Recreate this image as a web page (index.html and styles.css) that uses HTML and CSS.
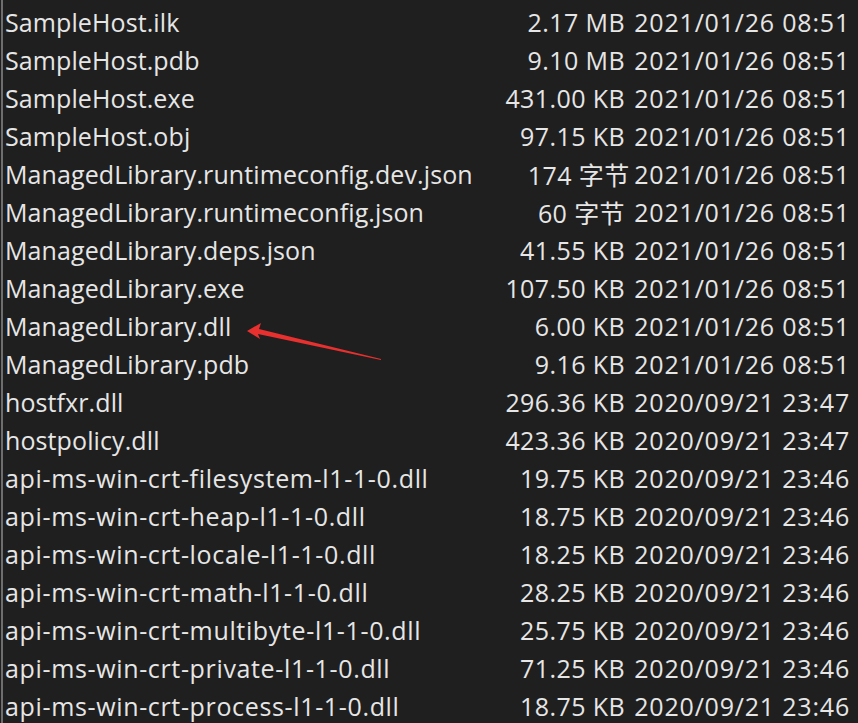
FILE: index.html
```html
<!DOCTYPE html>
<html lang="zh-CN">
  <head>
    <meta charset="UTF-8">
    <title>Files</title>
    <link rel="stylesheet" href="styles.css">
  </head>
  <body>
    <div class="listing">
      <div class="row"><span class="name">SampleHost.ilk</span><span class="size">2.17 MB</span><span class="date">2021/01/26 08:51</span></div>
      <div class="row"><span class="name">SampleHost.pdb</span><span class="size">9.10 MB</span><span class="date">2021/01/26 08:51</span></div>
      <div class="row"><span class="name">SampleHost.exe</span><span class="size">431.00 KB</span><span class="date">2021/01/26 08:51</span></div>
      <div class="row"><span class="name">SampleHost.obj</span><span class="size">97.15 KB</span><span class="date">2021/01/26 08:51</span></div>
      <div class="row"><span class="name">ManagedLibrary.runtimeconfig.dev.json</span><span class="size">174 字节</span><span class="date">2021/01/26 08:51</span></div>
      <div class="row"><span class="name">ManagedLibrary.runtimeconfig.json</span><span class="size">60 字节</span><span class="date">2021/01/26 08:51</span></div>
      <div class="row"><span class="name">ManagedLibrary.deps.json</span><span class="size">41.55 KB</span><span class="date">2021/01/26 08:51</span></div>
      <div class="row"><span class="name">ManagedLibrary.exe</span><span class="size">107.50 KB</span><span class="date">2021/01/26 08:51</span></div>
      <div class="row"><span class="name">ManagedLibrary.dll</span><span class="size">6.00 KB</span><span class="date">2021/01/26 08:51</span></div>
      <div class="row"><span class="name">ManagedLibrary.pdb</span><span class="size">9.16 KB</span><span class="date">2021/01/26 08:51</span></div>
      <div class="row"><span class="name">hostfxr.dll</span><span class="size">296.36 KB</span><span class="date">2020/09/21 23:47</span></div>
      <div class="row"><span class="name">hostpolicy.dll</span><span class="size">423.36 KB</span><span class="date">2020/09/21 23:47</span></div>
      <div class="row"><span class="name api">api-ms-win-crt-filesystem-l1-1-0.dll</span><span class="size">19.75 KB</span><span class="date">2020/09/21 23:46</span></div>
      <div class="row"><span class="name api">api-ms-win-crt-heap-l1-1-0.dll</span><span class="size">18.75 KB</span><span class="date">2020/09/21 23:46</span></div>
      <div class="row"><span class="name api">api-ms-win-crt-locale-l1-1-0.dll</span><span class="size">18.25 KB</span><span class="date">2020/09/21 23:46</span></div>
      <div class="row"><span class="name api">api-ms-win-crt-math-l1-1-0.dll</span><span class="size">28.25 KB</span><span class="date">2020/09/21 23:46</span></div>
      <div class="row"><span class="name api">api-ms-win-crt-multibyte-l1-1-0.dll</span><span class="size">25.75 KB</span><span class="date">2020/09/21 23:46</span></div>
      <div class="row"><span class="name api">api-ms-win-crt-private-l1-1-0.dll</span><span class="size">71.25 KB</span><span class="date">2020/09/21 23:46</span></div>
      <div class="row"><span class="name api">api-ms-win-crt-process-l1-1-0.dll</span><span class="size">18.75 KB</span><span class="date">2020/09/21 23:46</span></div>
    </div>
    <svg class="arrow" width="150" height="50" viewBox="0 0 150 50">
      <polygon points="0,8 14,0 12,6 134,36 134,37 11,11 13,16" fill="#e8302e"/>
    </svg>
  </body>
</html>
```

FILE: styles.css
```css
html, body {
  margin: 0;
  height: 100%;
  overflow: hidden;
}

body {
  background: #1f1f1f;
  color: #e6e6e6;
  font-family: "Open Sans", "Noto Sans CJK SC", sans-serif;
  font-size: 25px;
  position: relative;
}

.listing {
  border-left: 2px solid #6e6e6e;
  margin-left: 1px;
  padding-top: 3px;
  height: 100%;
  box-sizing: border-box;
}

.row {
  display: flex;
  height: 38px;
  align-items: center;
  white-space: nowrap;
}

.name {
  flex: 1;
  padding-left: 2px;
  letter-spacing: 0.1px;
}

/* hyphens and digits run wider in the original face */
.name.api {
  letter-spacing: 0.65px;
}

.size {
  text-align: right;
  width: 160px;
  letter-spacing: 0.4px;
}

.date {
  width: 225px;
  text-align: right;
  padding-right: 8px;
  letter-spacing: 0.8px;
}

.arrow {
  position: absolute;
  left: 247px;
  top: 323px;
}
```
